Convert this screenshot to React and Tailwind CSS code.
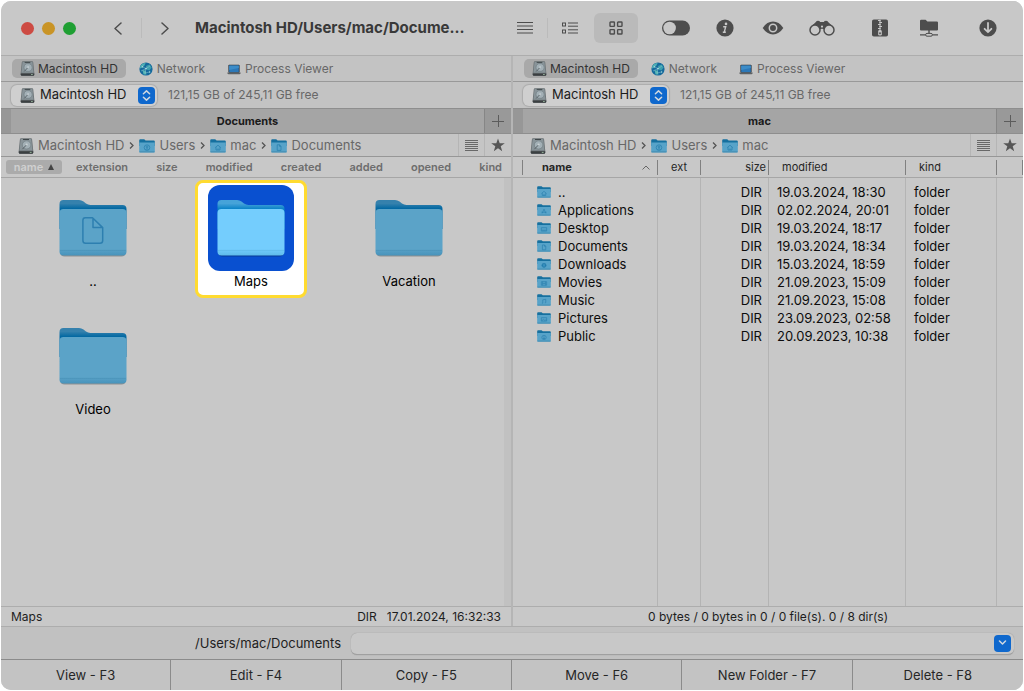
import React from "react";

function DiskIcon({ className }) {
  return (
    <svg viewBox="0 0 16 16" className={className} aria-hidden="true">
      <path d="M1.9 1.4 Q2 .3 3.1 .3 H12.9 Q14 .3 14.1 1.4 L15.3 13 V14.4 Q15.3 15.7 14 15.7 H2 Q.7 15.7 .7 14.4 V13 Z" fill="#6a7174" />
      <path d="M.8 13.2 H15.2 V14.4 Q15.2 15.7 14 15.7 H2 Q.8 15.7 .8 14.4Z" fill="#3b3f41" />
      <path d="M2.7 1 H13.3 L14.5 12.6 H1.5 Z" fill="#899499" />
      <ellipse cx="8.6" cy="6.9" rx="4.3" ry="4.1" fill="#a3b0b6" stroke="#6b777c" strokeWidth=".6" />
      <circle cx="8.6" cy="6.7" r="1.1" fill="#c9d1d5" />
      <path d="M4.4 11.2 L8.2 7.2" stroke="#4f585c" strokeWidth=".9" />
      <path d="M5 1.5 H11" stroke="#40474a" strokeWidth="1" />
      <rect x="11.8" y="13.9" width="1.8" height=".9" fill="#9fc0a4" />
    </svg>
  );
}

function GlobeIcon({ className }) {
  return (
    <svg viewBox="0 0 14 14" className={className} aria-hidden="true">
      <circle cx="7" cy="7" r="6.6" fill="#15699c" />
      <path d="M2 3 Q4 .8 6.6 1 L5.4 3.6 L3.4 5.6 L1 6.6 Q.8 4.6 2 3Z" fill="#4fb0b5" />
      <path d="M7 4 L10.6 2.6 L12.6 5.4 L10.4 8.6 L7.6 7.6Z" fill="#3d9fae" />
      <path d="M3.4 8 L6.6 8.8 L7.4 12.6 L4.6 12.6 Z" fill="#55b4b4" />
      <path d="M3 4.6 L7 6.6 L11 4 M7 6.6 L6 11 L10.6 10 M7 6.6 L2 9" stroke="#8fcad2" strokeWidth=".5" fill="none" />
      <circle cx="7" cy="6.6" r=".8" fill="#b8e0e2" />
      <circle cx="10.6" cy="10" r=".7" fill="#a6d6da" />
      <circle cx="3.4" cy="4.8" r=".7" fill="#a6d6da" />
    </svg>
  );
}

function LaptopIcon({ className }) {
  return (
    <svg viewBox="0 0 14 14" className={className} aria-hidden="true">
      <rect x="1.4" y="2.8" width="11.2" height="8" rx=".8" fill="#27313b" />
      <rect x="2.2" y="3.6" width="9.6" height="6.6" fill="#2c78b8" />
      <path d="M2.2 3.6 H11.8 V6 L2.2 8Z" fill="#3c8cc8" />
      <path d="M.4 10.4 H13.6 V11.2 Q13.4 12.2 12.4 12.2 H1.6 Q.6 12.2 .4 11.2Z" fill="#5d6163" />
    </svg>
  );
}

const GLYPHS = {
  user: (
    <>
      <circle cx="8" cy="8.6" r="2.8" />
      <circle cx="8" cy="7.9" r=".9" />
      <path d="M6.4 10.6 Q8 8.8 9.6 10.6" />
    </>
  ),
  home: <path d="M5.2 8.6 L8 6.2 L10.8 8.6 M6 8.2 V11 H10 V8.2 M8 11 V9.4" />,
  apps: <path d="M8 6 L5.8 11 M8 6 L10.2 11 M5 9.6 H11" />,
  desktop: <path d="M5 6.6 H11 V10.6 H5Z M5.8 9.6 H10.2" />,
  document: <path d="M6.2 5.8 H8.6 L10 7.4 V11.4 H6.2Z M8.6 5.8 V7.4 H10" />,
  download: (
    <>
      <circle cx="8" cy="8.6" r="2.4" fill="#1f7cae" />
      <path d="M8 7.2 V10" stroke="#69b4d8" />
    </>
  ),
  movie: <path d="M5 6.6 H11 V10.8 H5Z M6.4 6.6 V10.8 M9.6 6.6 V10.8 M6.4 8.7 H9.6" />,
  music: <path d="M6.6 10.6 V6.8 L10 6.2 V10 M5.6 10.8 H6.6 M9 10.2 H10" />,
  picture: <path d="M5 6.6 H11 V10.6 H5Z M5.4 10.2 L7.4 8.6 L9 9.8 L10.6 9" />,
  public: (
    <>
      <circle cx="8" cy="8.7" r="2.5" />
      <path d="M8 7.2 V10.4 L6.8 9.4 M8 10.4 L9.2 9.4" />
    </>
  ),
};

function SmallFolder({ glyph, className }) {
  return (
    <svg viewBox="0 0 16 14" preserveAspectRatio="none" className={className} aria-hidden="true">
      <path d="M.2 1.4 Q.2 .2 1.3 .2 H5.2 L6.6 1.5 H14.8 Q15.8 1.5 15.8 2.6 V7 H.2Z" fill="#16709f" />
      <path d="M.2 3.4 H15.8 V12.6 Q15.8 13.6 14.7 13.6 H1.3 Q.2 13.6 .2 12.6Z" fill="#57a3c9" />
      <path d="M.4 12.9 H15.6" stroke="#4189ad" strokeWidth=".9" />
      <g fill="none" stroke="#2b81af" strokeWidth=".8">
        {GLYPHS[glyph]}
      </g>
    </svg>
  );
}

function BigFolder({ bright, doc }) {
  const id = bright ? "front-bright" : doc ? "front-doc" : "front";
  const back = bright ? ["#46a3d9", "#0d84c8"] : ["#3581ad", "#0268a2"];
  const front = bright ? ["#74cdfd", "#5fbbea"] : ["#5ba3c8", "#4893bb"];
  return (
    <svg viewBox="0 0 68 58" className="h-[58px] w-[68px]" aria-hidden="true">
      <defs>
        <linearGradient id={id + "-back"} x1="0" y1="0" x2="0" y2="1">
          <stop offset=".12" stopColor={back[0]} />
          <stop offset=".3" stopColor={back[1]} />
        </linearGradient>
        <linearGradient id={id + "-face"} x1="0" y1="0" x2="0" y2="1">
          <stop offset="0" stopColor={front[0]} />
          <stop offset=".85" stopColor={front[0]} />
          <stop offset="1" stopColor={front[1]} />
        </linearGradient>
      </defs>
      <rect x="1" y="30" width="66" height="27.6" rx="4.5" fill="#000" opacity=".28" />
      <path
        d="M.5 5 Q.5 1 4.5 1 H20 Q22.5 1 24.5 2.6 L27 4.6 Q29 6 31.5 6 H63.5 Q67.5 6 67.5 10 V30 H.5Z"
        fill={`url(#${id}-back)`}
      />
      <path
        d="M.5 14 Q.5 10 4.5 10 H63.5 Q67.5 10 67.5 14 V52.5 Q67.5 56.5 63.5 56.5 H4.5 Q.5 56.5 .5 52.5Z"
        fill={`url(#${id}-face)`}
      />
      <path d="M1 51.5 H67" stroke={bright ? "#5cb5e4" : "#488fb5"} strokeWidth=".7" opacity=".7" />
      {doc && (
        <path
          d="M26.3 18.7 H33.5 L43.7 28.6 V41.5 Q43.7 44.3 41 44.3 H26.6 Q23.9 44.3 23.9 41.5 V21.3 Q23.9 18.7 26.3 18.7Z M34 19 V28.6 H43.5"
          fill="none"
          stroke="#2d7fb0"
          strokeWidth="1.5"
          strokeLinejoin="round"
        />
      )}
    </svg>
  );
}

const DETAIL_YS = [0.5, 2.5, 4.5, 6.5, 8.5, 10.5];

function ToolButton({ label, className = "", children }) {
  return (
    <button type="button" aria-label={label} className={`flex shrink-0 items-center justify-center ${className}`}>
      {children}
    </button>
  );
}

function Toolbar() {
  return (
    <header className="flex h-[55px] shrink-0 items-center border-b border-[#adadad] bg-[#c8c8c8] pl-5 pr-[26px] text-[#4d4d4d]">
      <div className="flex gap-2">
        <button type="button" aria-label="Close" className="size-[13px] rounded-full bg-[#cd4b43]" />
        <button type="button" aria-label="Minimize" className="size-[13px] rounded-full bg-[#c99426]" />
        <button type="button" aria-label="Zoom window" className="size-[13px] rounded-full bg-[#1f9f33]" />
      </div>
      <nav className="ml-[25px] flex items-center">
        <ToolButton label="Back" className="h-7 w-[34px]">
          <svg viewBox="0 0 8 13" className="h-[13px] w-2" fill="none" stroke="currentColor" strokeWidth="1.5" strokeLinecap="round" strokeLinejoin="round">
            <path d="M7 1 L1 6.5 L7 12" />
          </svg>
        </ToolButton>
        <span className="mx-[6px] h-5 w-px bg-[#bbb]" />
        <ToolButton label="Forward" className="h-7 w-[34px]">
          <svg viewBox="0 0 8 13" className="h-[13px] w-2" fill="none" stroke="currentColor" strokeWidth="1.5" strokeLinecap="round" strokeLinejoin="round">
            <path d="M1 1 L7 6.5 L1 12" />
          </svg>
        </ToolButton>
      </nav>
      <h1 className="ml-[13px] min-w-0 flex-1 truncate text-[15px] font-bold text-[#393939]">Macintosh HD/Users/mac/Docume...</h1>
      <div className="flex shrink-0 items-center">
        <ToolButton label="Brief list" className="h-[30px] w-11">
          <svg viewBox="0 0 16 12" className="h-3 w-4" stroke="currentColor">
            <path d="M0 .5 H16 M0 4 H16 M0 7.5 H16 M0 11 H16" />
          </svg>
        </ToolButton>
        <span className="h-5 w-px bg-[#bbb]" />
        <ToolButton label="Detailed list" className="h-[30px] w-11">
          <svg viewBox="0 0 16 12" className="h-3 w-4" fill="none" stroke="currentColor">
            <rect x=".5" y="1" width="3" height="3" />
            <rect x=".5" y="8" width="3" height="3" />
            <path d="M6 1 H16 M6 4.2 H16 M6 7.8 H16 M6 11 H16" />
          </svg>
        </ToolButton>
        <ToolButton label="Icons" className="ml-[2px] h-[30px] w-11 rounded-md bg-[#bababa]">
          <svg viewBox="0 0 14 14" className="size-[14px]" fill="none" stroke="currentColor" strokeWidth="1.4">
            <rect x="1" y="1" width="4.4" height="4.4" rx=".6" />
            <rect x="8.6" y="1" width="4.4" height="4.4" rx=".6" />
            <rect x="1" y="8.6" width="4.4" height="4.4" rx=".6" />
            <rect x="8.6" y="8.6" width="4.4" height="4.4" rx=".6" />
          </svg>
        </ToolButton>
        <ToolButton label="Show hidden files" className="ml-6">
          <svg viewBox="0 0 28 16" className="h-4 w-7">
            <rect x="0" y=".5" width="28" height="15" rx="7.5" fill="currentColor" />
            <circle cx="7.6" cy="8" r="6.3" fill="#c8c8c8" />
          </svg>
        </ToolButton>
        <ToolButton label="Info" className="ml-[26px]">
          <svg viewBox="0 0 18 18" className="size-[18px]">
            <circle cx="9" cy="9" r="8.6" fill="currentColor" />
            <circle cx="10" cy="4.9" r="1.3" fill="#c8c8c8" />
            <path d="M7.2 7.8 H9.7 L8.4 12.6 Q8.2 13.6 9.6 12.8 M6.8 13.3 H9.9" fill="none" stroke="#c8c8c8" strokeWidth="1.4" />
          </svg>
        </ToolButton>
        <ToolButton label="Quick look" className="ml-7">
          <svg viewBox="0 0 22 14" className="h-[14px] w-[22px]">
            <path d="M.7 7 Q5 .6 11 .6 Q17 .6 21.3 7 Q17 13.4 11 13.4 Q5 13.4 .7 7Z" fill="currentColor" />
            <circle cx="11" cy="7" r="3.7" fill="none" stroke="#c8c8c8" strokeWidth="1.5" />
          </svg>
        </ToolButton>
        <ToolButton label="Search" className="ml-[25px]">
          <svg viewBox="0 0 26 16" className="h-4 w-[26px]">
            <path d="M2 6.6 L6.4 2.6 Q7.4 .6 9.2 .9 Q10.6 .6 11 2 H15 Q15.4 .6 16.8 .9 Q18.6 .6 19.6 2.6 L24 6.6 L16 10 Q13 7.6 10 10Z" fill="currentColor" />
            <circle cx="6" cy="10" r="5" fill="#c8c8c8" stroke="currentColor" strokeWidth="1.5" />
            <circle cx="20" cy="10" r="5" fill="#c8c8c8" stroke="currentColor" strokeWidth="1.5" />
            <circle cx="13" cy="6.6" r="1.1" fill="#c8c8c8" />
          </svg>
        </ToolButton>
        <ToolButton label="Archive" className="ml-[37px]">
          <svg viewBox="0 0 16 18" className="h-[18px] w-4">
            <rect x="0" y=".5" width="16" height="17" rx="1.8" fill="currentColor" />
            <path d="M6 1.5 H8.6 M7.4 3.5 H10 M6 5.5 H8.6 M7.4 7.5 H10 M6 9.5 H8.6" stroke="#c8c8c8" strokeWidth="1" />
            <path d="M8 .5 V11" stroke="#c8c8c8" strokeWidth="1" />
            <rect x="6.2" y="11" width="3.6" height="5.6" rx="1.4" fill="#c8c8c8" />
            <rect x="7.2" y="13.4" width="1.6" height="1.8" fill="currentColor" />
          </svg>
        </ToolButton>
        <ToolButton label="Network connections" className="ml-[31px]">
          <svg viewBox="0 0 20 18" className="h-[18px] w-5">
            <path d="M1 2 Q1 .8 2.2 .8 H6.6 L8.4 2.4 H17.8 Q19 2.4 19 3.6 V10.6 Q19 11.6 18 11.6 H2 Q1 11.6 1 10.6Z" fill="currentColor" />
            <path d="M10 11 V14.4" stroke="currentColor" strokeWidth="1.4" />
            <path d="M1 15.8 H6.6 M13.4 15.8 H19" stroke="currentColor" strokeWidth="1.2" />
            <rect x="6.6" y="14.4" width="6.8" height="2.8" rx="1.4" fill="none" stroke="currentColor" />
          </svg>
        </ToolButton>
        <ToolButton label="Downloads" className="ml-[40px]">
          <svg viewBox="0 0 18 18" className="size-[18px]">
            <circle cx="9" cy="9" r="8.6" fill="currentColor" />
            <path d="M9 4 V13 M5.6 9.8 L9 13.2 L12.4 9.8" fill="none" stroke="#c8c8c8" strokeWidth="1.8" strokeLinecap="round" strokeLinejoin="round" />
          </svg>
        </ToolButton>
      </div>
    </header>
  );
}

function PaneHead({ title, crumbs }) {
  return (
    <>
      <nav aria-label="Favorites" className="flex h-[26px] items-center border-b border-[#999] bg-[#c3c3c3] pl-[11px] text-xs text-[#686868]">
        <a href="#hd" className="flex h-[19px] items-center gap-[3px] rounded-[5px] bg-[#a9a9a9] px-2 text-[#333]">
          <DiskIcon className="size-[15px]" />
          Macintosh HD
        </a>
        <a href="#network" className="ml-[13px] flex items-center gap-1">
          <GlobeIcon className="size-[14px]" />
          Network
        </a>
        <a href="#processes" className="ml-[22px] flex items-center gap-1">
          <LaptopIcon className="size-[14px]" />
          Process Viewer
        </a>
      </nav>
      <div className="flex h-[26px] items-center gap-[11px] bg-[#c3c3c3] pl-[10px] text-[#686868]">
        <div className="relative w-[146px]">
          <select aria-label="Volume" className="block h-[21px] w-full appearance-none rounded-md bg-[#cfcfcf] pl-[29px] text-[13px] text-[#1c1c1c] shadow-[0_0_1px_1px_rgba(0,0,0,0.12)]">
            <option>Macintosh HD</option>
          </select>
          <DiskIcon className="pointer-events-none absolute left-[9px] top-[3px] size-[15px]" />
          <svg viewBox="0 0 17 17" className="pointer-events-none absolute right-[2px] top-[2px] size-[17px]" aria-hidden="true">
            <rect width="17" height="17" rx="4" fill="#0f68cd" />
            <path d="M5.4 6.8 L8.5 3.9 L11.6 6.8 M5.4 10.2 L8.5 13.1 L11.6 10.2" fill="none" stroke="#d0d8e0" strokeWidth="1.5" strokeLinecap="round" strokeLinejoin="round" />
          </svg>
        </div>
        <span className="text-xs">121,15 GB of 245,11 GB free</span>
      </div>
      <div className="flex h-[26px] border-y border-[#8e8e8e] bg-[#a5a5a5]">
        <span className="w-[10px] bg-[#979797]" />
        <button type="button" className="flex-1 text-[11px] font-bold text-[#1a1a1a]">
          {title}
        </button>
        <button type="button" aria-label="New tab" className="flex w-[27px] items-center justify-center border-l border-[#868686] bg-[#999] text-[#5c5c5c]">
          <svg viewBox="0 0 12 12" className="size-3" stroke="currentColor">
            <path d="M6.5 0 V12 M0 6.5 H12" />
          </svg>
        </button>
      </div>
      <div className="flex h-[23px] items-stretch border-b border-[#979797] bg-[#c5c5c5] text-[#686868]">
        <nav aria-label="Path" className="flex min-w-0 flex-1 items-center pl-[17px] pt-px text-[13px]">
          {crumbs.map((c, i) => (
            <React.Fragment key={c.name}>
              {i > 0 && (
                <svg viewBox="0 0 5 7" className="mx-[5px] h-[7px] w-[5px]" fill="none" stroke="#555" strokeWidth="1.3" aria-hidden="true">
                  <path d="M1 .5 L4 3.5 L1 6.5" />
                </svg>
              )}
              <a href={"#" + c.name} className="flex items-center gap-1">
                {c.glyph ? <SmallFolder glyph={c.glyph} className="h-[14px] w-4" /> : <DiskIcon className="size-4" />}
                {c.name}
              </a>
            </React.Fragment>
          ))}
        </nav>
        <button type="button" aria-label="History" className="flex w-[26px] items-center justify-center border-l border-[#b5b5b5]">
          <svg viewBox="0 0 13 11" className="h-[11px] w-[13px]" stroke="currentColor" aria-hidden="true">
            {DETAIL_YS.map((y) => (
              <path key={y} d={`M0 ${y} H13`} />
            ))}
          </svg>
        </button>
        <button type="button" aria-label="Favorites" className="flex w-[27px] items-center justify-center border-l border-[#b5b5b5] text-[#565656]">
          <svg viewBox="0 0 14 14" className="size-[14px]" fill="currentColor">
            <path d="M7 .4 L8.7 5.2 H13.8 L9.7 8.3 L11.2 13.3 L7 10.3 L2.8 13.3 L4.3 8.3 L.2 5.2 H5.3Z" />
          </svg>
        </button>
      </div>
    </>
  );
}

const SORTS = ["extension", "size", "modified", "created", "added", "opened", "kind"];
const FOLDERS = [
  { name: "..", doc: true },
  { name: "Maps", selected: true },
  { name: "Vacation" },
  { name: "Video" },
];

function LeftPane() {
  return (
    <section className="flex min-w-0 flex-1 flex-col">
      <PaneHead
        title="Documents"
        crumbs={[{ name: "Macintosh HD" }, { name: "Users", glyph: "user" }, { name: "mac", glyph: "home" }, { name: "Documents", glyph: "document" }]}
      />
      <div className="flex h-[21px] shrink-0 items-center border-b border-[#a6a6a6] pl-[5px] pr-[9px] text-[11px] font-semibold text-[#6d6d6d]">
        <button type="button" className="flex h-[14px] w-[56px] items-center justify-center gap-[5px] rounded-[3px] bg-[#ababab] text-[#d0d0d0]">
          name
          <svg viewBox="0 0 6 6" className="size-[6px]" aria-hidden="true">
            <path d="M3 0 L6 6 H0Z" fill="#444" />
          </svg>
        </button>
        <div className="flex flex-1 justify-between pl-[14px]">
          {SORTS.map((s) => (
            <button type="button" key={s}>
              {s}
            </button>
          ))}
        </div>
      </div>
      <div className="flex min-h-0 flex-1">
        <div className="grid flex-1 auto-rows-[118px] grid-cols-[repeat(auto-fill,158px)] gap-y-[10px] pl-[13px] pt-[2px]">
          {FOLDERS.map((f) => (
            <button
              type="button"
              key={f.name}
              className={`flex h-full w-[112px] flex-col items-center justify-self-center rounded-lg border-[3px] pt-[2px] text-[13px] text-black ${
                f.selected ? "border-[#ffdb30] bg-white" : "border-transparent"
              }`}
            >
              <span className={`flex size-[86px] items-center justify-center rounded-xl ${f.selected ? "bg-[#0950d0]" : ""}`}>
                <BigFolder bright={f.selected} doc={f.doc} />
              </span>
              <span className="leading-5">{f.name}</span>
            </button>
          ))}
        </div>
        <div className="w-[7px] bg-[#c1c1c1]" />
      </div>
      <footer className="flex h-[20px] shrink-0 items-center justify-between border-t border-[#adadad] px-[10px] pt-px text-xs text-[#1e1e1e]">
        <span>Maps</span>
        <span className="flex gap-[10px]">
          <span>DIR</span>
          <span>17.01.2024, 16:32:33</span>
        </span>
      </footer>
    </section>
  );
}

const FILES = [
  ["..", "home", "19.03.2024, 18:30"],
  ["Applications", "apps", "02.02.2024, 20:01"],
  ["Desktop", "desktop", "19.03.2024, 18:17"],
  ["Documents", "document", "19.03.2024, 18:34"],
  ["Downloads", "download", "15.03.2024, 18:59"],
  ["Movies", "movie", "21.09.2023, 15:09"],
  ["Music", "music", "21.09.2023, 15:08"],
  ["Pictures", "picture", "23.09.2023, 02:58"],
  ["Public", "public", "20.09.2023, 10:38"],
];

function HeadCell({ children, className = "" }) {
  return (
    <th scope="col" className="p-0 font-normal">
      <div className={`flex h-[15px] items-center border-r border-[#808080] ${className}`}>{children}</div>
    </th>
  );
}

function RightPane() {
  return (
    <section className="flex min-w-0 flex-1 flex-col">
      <PaneHead title="mac" crumbs={[{ name: "Macintosh HD" }, { name: "Users", glyph: "user" }, { name: "mac", glyph: "home" }]} />
      <div className="min-h-0 flex-1">
        <table className="h-full w-full table-fixed border-separate border-spacing-0 text-left text-[#0c0c0c]">
          <colgroup>
            <col className="w-[10px]" />
            <col />
            <col className="w-[43px]" />
            <col className="w-[68px]" />
            <col className="w-[137px]" />
            <col className="w-[91px]" />
            <col className="w-[26px]" />
          </colgroup>
          <thead className="text-[11px] text-[#262626]">
            <tr className="h-[21px] [&>th]:border-b [&>th]:border-[#a6a6a6]">
              <HeadCell />
              <HeadCell className="justify-between pl-[19px] pr-[7px] font-bold">
                name
                <svg viewBox="0 0 8 5" className="h-[5px] w-2" fill="none" stroke="#666" aria-hidden="true">
                  <path d="M.5 4.5 L4 1 L7.5 4.5" />
                </svg>
              </HeadCell>
              <HeadCell className="pl-[13px]">ext</HeadCell>
              <HeadCell className="justify-end pr-[2px]">size</HeadCell>
              <HeadCell className="pl-[13px]">modified</HeadCell>
              <HeadCell className="pl-[13px]">kind</HeadCell>
              <HeadCell />
            </tr>
          </thead>
          <tbody className="text-[13px] [&_td]:p-0 [&_td:not(:first-child):not(:last-child)]:border-r [&_td]:border-[#b4b4b4]">
            <tr className="h-[5px]">
              <td /><td /><td /><td /><td /><td /><td />
            </tr>
            {FILES.map(([name, glyph, date]) => (
              <tr key={name} className="h-[18px] leading-[18px]">
                <td />
                <td>
                  <span className="flex items-center gap-[7px] pl-[14px]">
                    <SmallFolder glyph={glyph} className="h-3 w-[14px]" />
                    {name}
                  </span>
                </td>
                <td />
                <td>
                  <span className="block pr-[6px] text-right">DIR</span>
                </td>
                <td>
                  <span className="block whitespace-nowrap pl-2">{date}</span>
                </td>
                <td>
                  <span className="block pl-2">folder</span>
                </td>
                <td />
              </tr>
            ))}
            <tr className="h-full">
              <td /><td /><td /><td /><td /><td /><td />
            </tr>
          </tbody>
        </table>
      </div>
      <footer className="flex h-[20px] shrink-0 items-center justify-center border-t border-[#adadad] pt-px text-xs text-[#1e1e1e]">
        0 bytes / 0 bytes in 0 / 0 file(s). 0 / 8 dir(s)
      </footer>
    </section>
  );
}

const ACTIONS = ["View - F3", "Edit - F4", "Copy - F5", "Move - F6", "New Folder - F7", "Delete - F8"];

export default function App() {
  return (
    <div className="h-screen bg-white p-px font-['Inter','Liberation_Sans',sans-serif]">
      <main className="flex h-full flex-col overflow-hidden rounded-[10px] bg-[#c8c8c8]">
        <Toolbar />
        <div className="flex min-h-0 flex-1">
          <LeftPane />
          <div className="w-[2px] bg-[#b5b5b5]" />
          <RightPane />
        </div>
        <form className="flex h-[33px] shrink-0 items-center gap-[10px] border-t border-[#adadad] bg-[#c1c1c1] pr-[9px] pt-px" onSubmit={(e) => e.preventDefault()}>
          <label htmlFor="command" className="w-[340px] shrink-0 pt-px text-right text-[13px] text-[#1e1e1e]">
            /Users/mac/Documents
          </label>
          <div className="flex h-[22px] flex-1 items-center rounded-md border-b border-[#a0a0a0] bg-[#c8c8c8] pr-[3px] shadow-[0_0_1px_rgba(0,0,0,0.3)]">
            <input id="command" type="text" className="h-full min-w-0 flex-1 bg-transparent px-2 text-[13px] outline-none" />
            <button type="button" aria-label="Command history" className="flex size-[17px] items-center justify-center rounded bg-[#0f68cd]">
              <svg viewBox="0 0 9 6" className="h-[6px] w-[9px]" fill="none" stroke="#d0d8e0" strokeWidth="1.5" strokeLinecap="round" strokeLinejoin="round">
                <path d="M1.5 1 L4.5 4 L7.5 1" />
              </svg>
            </button>
          </div>
        </form>
        <div className="grid h-[31px] shrink-0 grid-cols-6 divide-x divide-[#8b8b8b] border-t border-[#8b8b8b] bg-[#c3c3c3] text-[13px] text-[#262626]">
          {ACTIONS.map((a) => (
            <button type="button" key={a} className="pt-[2px]">
              {a}
            </button>
          ))}
        </div>
      </main>
    </div>
  );
}
